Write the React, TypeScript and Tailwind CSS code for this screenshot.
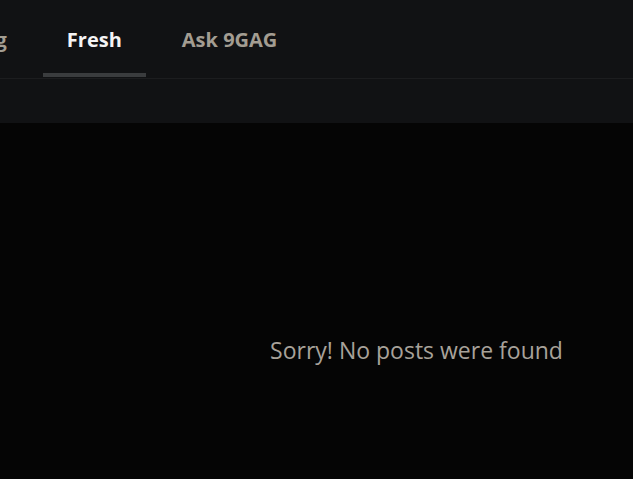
import React from "react"

const tabs = [
  { label: "Trending", active: false },
  { label: "Fresh", active: true },
  { label: "Ask 9GAG", active: false },
]

export default function App() {
  return (
    <div
      className="min-h-screen w-full bg-[#050505]"
      style={{ fontFamily: '"Open Sans", "Noto Sans", sans-serif' }}
    >
      <header className="h-[79px] overflow-hidden border-b border-[#1c1d1f] bg-[#111214]">
        <nav className="-ml-[106px] flex h-full gap-3">
          {tabs.map((t) => (
            <a key={t.label} href="#" className="flex flex-col">
              <span
                className={
                  "flex flex-1 items-center px-6 pt-[7px] text-[20px] font-bold " +
                  (t.active ? "text-[#f4f4f4]" : "text-[#a39d92]")
                }
              >
                {t.label}
              </span>
              <span className={"h-1 " + (t.active ? "bg-[#3a3c3e]" : "bg-transparent")} />
              <span className="h-px" />
            </a>
          ))}
        </nav>
      </header>
      <div className="h-[44px] bg-[#111214]" />
      <main className="flex">
        <aside className="w-[200px] shrink-0" />
        <section className="flex flex-1 justify-center pt-[210px]">
          <p className="text-[23px] text-[#a8a29a]">Sorry! No posts were found</p>
        </section>
      </main>
    </div>
  )
}
